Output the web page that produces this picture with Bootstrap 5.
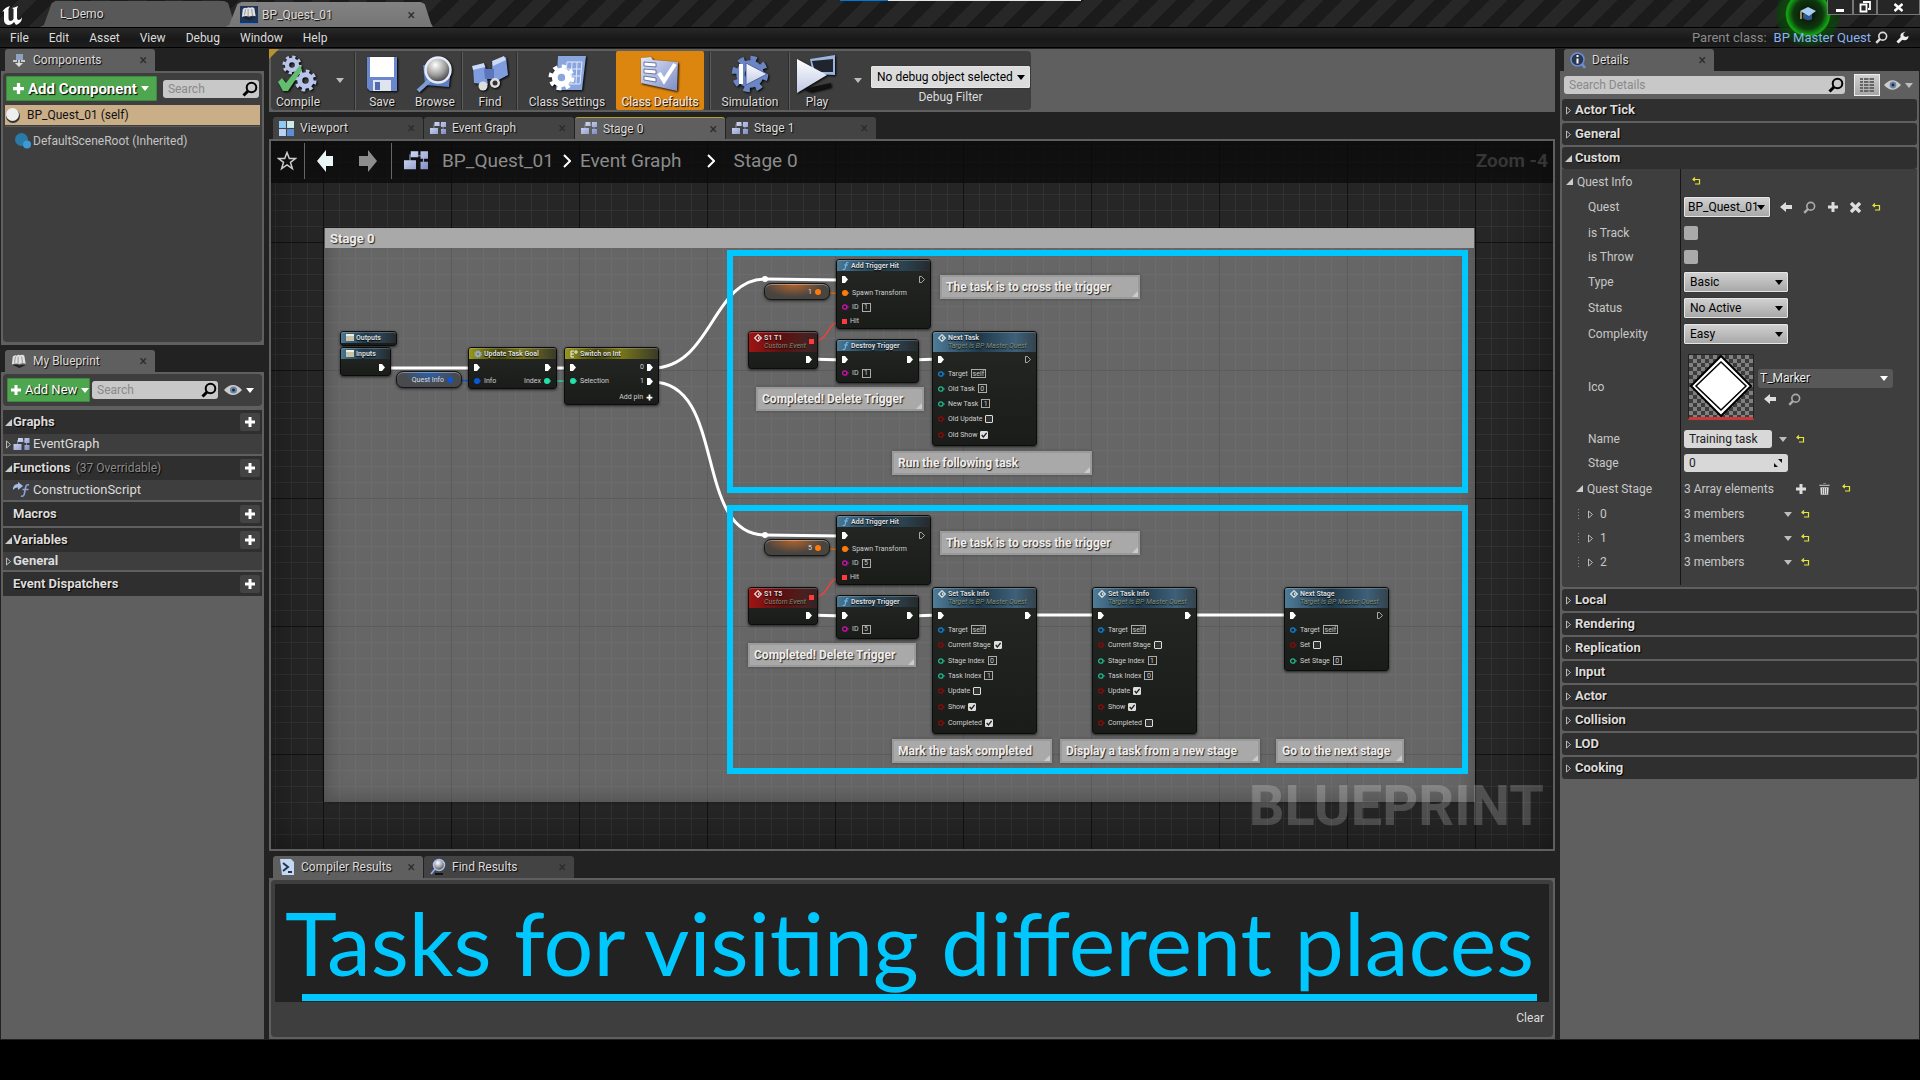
<!DOCTYPE html>
<html lang="en">
<head>
<meta charset="utf-8">
<meta name="viewport" content="width=device-width, initial-scale=1">
<title>BP_Quest_01</title>
<link href="https://cdn.jsdelivr.net/npm/bootstrap@5.3.0/dist/css/bootstrap.min.css" rel="stylesheet">
<style>
:root{--frame:#5f5f5f;--panel:#3e3e3e;--head:#2f2f2f;--dark:#222;--cyan:#00c8ff}
body{font-family:Roboto,"Liberation Sans",sans-serif;font-size:13px;line-height:16px;color:#dcdcdc;background:#000;height:100vh;overflow:hidden}
svg{display:block;flex:none}
button,input,select{font-family:inherit}
.plain{background:none;border:0;padding:0;color:inherit;line-height:inherit;font-size:inherit}
.sh{text-shadow:1px 1px 1px #000}
.fs12{font-size:12px}
/* title bar */
.titlebar{height:28px;background:repeating-linear-gradient(135deg,#1b1b1b 0 13px,#272727 13px 26px);border-bottom:1px solid #000}
.logo{width:28px;height:24px;margin-right:12px}
.wtab{height:26px;padding-left:20px;background:#585858;clip-path:polygon(0 100%,2% 92%,6% 8%,8% 0,94% 0,96% 8%,99% 85%,100% 100%);font-size:12px}
.wtab-a{width:196px}
.wtab-b{width:208px;margin-left:-11px;background:linear-gradient(#828282,#757575);height:25px;padding-left:15px}
.wtab-b .closex{padding-right:18px}
.wbtn{height:15px;border:1px solid #777;border-top:0;background:#262626;color:#fff}
.progressline{left:840px;top:0;width:241px;height:1px;background:linear-gradient(90deg,#0078d7 20%,#e6e6e6 20%)}
.tutorial{right:79px;top:-19px;width:66px;height:66px;border-radius:50%;background:radial-gradient(closest-side,#0b1a0b 15%,#0d380d 45%,#14a814 65%,rgba(8,80,8,.75) 69%,rgba(8,66,8,.6) 94%,transparent)}
.menubar{height:20px;background:linear-gradient(#282828,#181818 60%,#1f1f1f);border-bottom:1px solid #000;padding:0 11px 0 10px}
.menubar a{color:#dcdcdc;text-decoration:none;margin-right:20px;font-size:12px}
.menubar .pclass{color:#8ab4f0;margin:0;font-size:13px;position:relative;z-index:1}
.menubar .plabel{color:#8b8b8b;margin-right:7px}
/* workspace */
.work{background:var(--dark);padding:1px;gap:5px}
.leftcol{width:263px}.rightcol{width:359px}
.tabs{height:22px;padding-left:4px;gap:1px;font-size:12px}
.ptab{width:150px;height:22px;background:#434343;border-radius:3px 3px 0 0;padding:0 8px 0 6px}
.ptab.on{background:var(--frame)}
.ptab.lit{border-top:1px solid #b8a030}
.ptab svg{margin-right:6px}
.closex{color:#2b2b2b;font-size:14px}
.gtabs{margin-top:5px}
.lefttabs{margin-top:5px}
.frame{background:var(--frame)}
.inner{background:var(--panel);border-radius:4px}
.green{background:#4ea64e;border:1px solid #3d8a3f;color:#fff;border-radius:1px;line-height:20px;white-space:nowrap}
.green svg{margin-right:3px}
.green .caret{margin-left:4px}
.green.big{font-size:15px;font-weight:700;height:25px;padding:0 7px 0 5px}
.green.mid{font-size:13px;height:24px;width:83px;padding:0 4px 0 2px}
.searchbox{background:#c8c8c8;border-radius:3px;height:18px;padding:0 1px 0 5px}
.searchbox input{border:0;background:none;outline:0;min-width:0;width:10px;padding:0;font-size:12px;height:18px}
.searchbox input::placeholder{color:#8a8a8a;opacity:1}
.caret{width:0;height:0;border:4px solid transparent;border-top:5px solid #fff;border-bottom:0;flex:none}
.caret.gray{border-top-color:#bdbdbd}.caret.blk{border-top-color:#000}
.compframe{padding:2px 0 3px}
.compbox{margin:0 2px;height:269px;padding:3px 2px 0;font-size:12px}
.comptop{gap:6px;padding:0 1px;margin-bottom:4px}
.selfrow{background:#c9ae88;color:#111;height:20px}
.selfrow svg{margin-right:6px}
.rootrow{height:29px;padding-left:10px;border-top:1px solid #5a5a5a;margin-top:1px;color:#c4c4c4}
.rootrow svg{margin-right:2px}
.mybp{padding:2px}
.bptop{height:32px;padding:0 4px;margin-bottom:4px;gap:2px}
.bpsearch{width:126px}
.cat{background:var(--head);height:24px;font-weight:700;padding:0 2px 0 1px}
.subrow{background:var(--panel);height:20px;padding-left:1px}
.subrow svg:nth-child(2){margin-right:3px}
.subrow.short{height:18px}
.gapt{margin-top:2px}
.over{font-weight:400;font-size:12px;color:#8b8b8b;margin-left:2px}
.exp{width:9px;flex:none}
.plusbtn{width:20px;height:18px;background:#434343;border:0;border-radius:2px;padding:0}
/* toolbar */
.toolbar{height:63px;padding:2px}
.toolset{width:760px;height:59px;font-size:12px}
.tool{height:59px;background:none;border:0;padding:0;color:#dcdcdc;text-shadow:1px 1px 1px #000;line-height:16px}
.tool svg{width:40px;height:38px;margin-bottom:1px;filter:drop-shadow(1px 1px 1px #000)}
.tool.sel{background:#dd860f;border-radius:2px;color:#eee}
.dirty{position:absolute;left:-2px;top:-2px;border:5px solid;border-color:#b8922c transparent transparent #b8922c}
.tdrop{width:30px}.tdrop2{width:27px}
.sep{width:1px;background:#5c5c5c;height:58px;flex:none;box-shadow:-1px 0 #2c2c2c}
.sep.far{margin-left:6px}
.w88{width:88px}.w86{width:86px}.w52{width:52px}.w54{width:54px}.w98{width:98px}.w78{width:78px}.w104{width:104px}
.wrapsel{position:relative}
.wrapsel .caret{position:absolute;right:5px;top:50%;margin-top:-2px;pointer-events:none}
.wrapsel select{appearance:none;display:block;width:100%;border:1px solid #e6e6e6;background:linear-gradient(#d0d0d0,#a8a8a8);color:#000;height:20px;font-size:12px;padding:0 5px;line-height:16px;border-radius:1px;box-shadow:0 0 1px #000}
.wrapsel.w86 select{padding:0 3px}
.dbgbox{padding-top:9px}
.dbg{width:159px;margin-bottom:1px}
.dbg select{background:#dcdcdc;height:22px}
/* graph */
.graph{border:2px solid var(--frame);position:relative;overflow:hidden;min-height:0;
 background-color:#262626;
 background-image:linear-gradient(90deg,#121212 1px,transparent 1px),linear-gradient(#121212 1px,transparent 1px),linear-gradient(90deg,#323232 1px,transparent 1px),linear-gradient(#323232 1px,transparent 1px);
 background-size:128px 128px,128px 128px,16px 16px,16px 16px;background-position:52px 101px,52px 101px,4px 5px,4px 5px}
.graph::after{content:"";position:absolute;inset:0;box-shadow:inset 0 0 50px rgba(0,0,0,.45);pointer-events:none}
.crumbs{position:relative;z-index:3;height:42px;background:rgba(10,10,10,.75);font-size:19px;color:#8b8b8b;padding:0 5px 2px 6px}
.crumbs a{color:#8b8b8b;text-decoration:none}
.crumbs .bar{width:1px;height:36px;background:#666;margin:0 12px 0 7px}
.crumbs .bar2{margin:0 12px 0 14px}
.fwd{margin-left:26px}.c1{margin-left:14px}.ch1{margin:0 9px}.ch2{margin:0 19px 0 25px}
.zoomlbl{font-weight:700;color:#363636}
.pan{position:absolute;left:-271px;top:-141px}
.pan>*{position:absolute}
.water{position:absolute;right:9px;bottom:8px;font-size:56px;line-height:70px;font-weight:700;color:rgba(255,255,255,.2)}
.cbox{left:324px;top:228px;width:1151px;height:574px;background:rgba(166,166,166,.5);box-shadow:inset 0 0 22px rgba(0,0,0,.25),0 0 2px #000}
.cbox b{display:block;height:20px;margin:0 1px;background:#a9a9a9;padding-left:5px;line-height:21px;color:#eee;text-shadow:1px 1px 1px #222}
.hl{left:727px;width:741px;border:6px solid var(--cyan)}
.note{height:24px;border:2px solid #9a9a9a;background:#a9a9a9;color:#eee;font-weight:700;font-size:12px;line-height:20px;padding-left:4px;text-shadow:1px 1px 1px #222;box-shadow:0 0 3px rgba(0,0,0,.3);white-space:nowrap}
.note::after{content:"";position:absolute;right:0;bottom:0;border:3px solid;border-color:transparent #ccc #ccc transparent}
.bpn{background:linear-gradient(#252725,#1a1c1a);border:1px solid #0c0c0c;border-radius:3px;box-shadow:0 1px 3px rgba(0,0,0,.7);font-size:7px;line-height:8px;color:#cfcfcf;white-space:nowrap}
.bpn header{height:11px;font-weight:700;padding:2px 0 0 5px;gap:2px;border-radius:2px 2px 0 0;box-shadow:inset 0 1px rgba(255,255,255,.2);display:flex;color:#ddd;text-shadow:0 1px 1px #000;margin-bottom:1px}
.bpn header.two{height:20px;margin-bottom:0}
.bpn.tall{padding-bottom:2px}
.bpn header i{display:block;font-weight:400;color:#87907a}
.h-blue{background:linear-gradient(90deg,#4a7894,#213b4b 45%,#2b4453 70%,#252a2c)}
.h-blue.two{background:linear-gradient(90deg,#4f7c99,#1f394a 45%,#3f6078 80%,#33434e)}
.h-olive{background:linear-gradient(90deg,#98981c,#45450f 35%,#77771c 60%,#3a3a28)}
.h-red{background:linear-gradient(90deg,#a01414,#5a1010 50%,#4a2020 80%,#332424)}
.pr{height:14px;display:flex;align-items:center;padding:0 5px;gap:3px}
.two~.pr:not(.x){height:15px}
.two~.pr.k:not(.x){height:16px}
.addpin{margin-top:2px}
.bpn input[type=text]{width:9px;height:9px;border:1px solid #aaa;background:none;color:#ccc;font-size:7px;padding:0;text-align:center;line-height:7px}
.bpn input.slf{width:15px}
.bpn input[type=checkbox]{appearance:none;width:8px;height:8px;margin:0;border:1px solid #ddd;border-radius:1px;background:#333}
.bpn input[type=checkbox]:checked{background:#ddd url("data:image/svg+xml,%3Csvg xmlns='http://www.w3.org/2000/svg' viewBox='0 0 6 6'%3E%3Cpath d='M.7 3 2.4 5 5.600 1' fill='none' stroke='%23222' stroke-width='1.300'/%3E%3C/svg%3E") center/6px 6px no-repeat}
.pill{width:66px;height:17px;border:1px solid #161616;border-radius:7px;color:#ddd;font-size:7px;line-height:8px;display:flex;align-items:center;justify-content:flex-end;padding-right:8px;gap:3px;box-shadow:0 1px 3px rgba(0,0,0,.6),inset 0 1px rgba(255,255,255,.35)}
.p-o{background:radial-gradient(ellipse at 45% 0,#b5622a,transparent 60%),#484541}
.p-b{background:radial-gradient(ellipse at 50% 0,#2a62b0,transparent 60%),#484a4d}
.dot{width:6px;height:6px;border-radius:50%;flex:none}
.dot.or{background:#ff7a0a}.dot.bl{background:#0a58d8}
.sq{width:5px;height:5px;background:#ff3a3a;flex:none}
.sq.hs{position:absolute;right:3px;top:7px}
#hlA{top:250px;height:243px}#hlB{top:505px;height:269px}
#nOut{left:340px;top:331px;width:57px;padding-bottom:1px}#nIn{left:340px;top:347px;width:51px;padding-bottom:1px}
#nUpd{left:468px;top:347px;width:89px}#nSw{left:564px;top:347px;width:95px}
#pQ{left:396px;top:371px}#pA{left:764px;top:283px}#pB{left:764px;top:539px}
#nAddA{left:836px;top:259px;width:95px}#nAddB{left:836px;top:515px;width:95px}
#nDesA{left:836px;top:339px;width:83px}#nDesB{left:836px;top:595px;width:83px}
#nEvA{left:748px;top:331px;width:70px}#nEvB{left:748px;top:587px;width:70px}
#nNext{left:932px;top:331px;width:105px}#nSetA{left:932px;top:587px;width:105px}
#nSetB{left:1092px;top:587px;width:105px}#nStg{left:1284px;top:587px;width:105px}
#cA{left:940px;top:275px;width:200px}#cB{left:940px;top:531px;width:200px}
#cC{left:756px;top:387px;width:168px}#cD{left:748px;top:643px;width:168px}
#cE{left:892px;top:451px;width:200px}#cF{left:892px;top:739px;width:160px}
#cG{left:1060px;top:739px;width:200px}#cH{left:1276px;top:739px;width:128px}
/* results */
.results{height:161px;padding:2px}
.results .inner{height:157px;padding:4px}
.log{height:118px;background:var(--dark);padding:8px 12px 0 10px}
.headline{font-family:Lato,"Open Sans",sans-serif;font-size:88px;line-height:100px;color:var(--cyan);white-space:nowrap}
.rule{height:7px;background:var(--cyan);margin:2px 0 0 17px}
.clear{font-size:12px;margin-right:5px}
/* details */
.dpanel{padding:3px 2px 0}
.dtop{padding:0 4px 0 2px;margin-bottom:3px}
.dtop .grid-btn{margin-left:9px}
.dcat{background:var(--head);height:22px;border-radius:3px;font-weight:700;margin-bottom:2px;padding-left:2px;gap:2px;flex:none}
.props{background:var(--panel);margin-bottom:2px;border-radius:0 0 3px 3px;font-size:12px;padding-bottom:13px;position:relative;color:#c8c8c8}
.props::before{content:"";position:absolute;left:118px;top:0;bottom:2px;width:1px;background:#161616}
.prow{height:26px;display:flex;align-items:center}
.prow>.nm{width:122px;padding-left:26px;flex:none;display:flex;align-items:center}
.prow.h24{height:24px}.prow.h25{height:25px}.prow.h27{height:27px}.prow.h80{height:80px}
.prow>.nm.top{padding-left:3px;gap:3px}.prow>.nm.arr{padding-left:13px;gap:3px}.prow>.nm.el{padding-left:15px;gap:5px}
.props input[type=checkbox]{appearance:none;width:14px;height:14px;margin:0;background:#aaa;border-radius:2px}
.props input[type=text]{border:0;border-radius:3px;background:#d8d8d8;color:#222;height:18px;padding:0 5px;font-size:12px}
.thumb{width:66px;height:66px;border:1px solid #222;background:repeating-conic-gradient(#3c3c3c 0 25%,#808080 0 50%) 0 0/8px 8px;border-bottom:3px solid #c83a3a}
.asset{width:135px}
.asset select{background:#585858;border:0;color:#eee;text-shadow:1px 1px #000;padding:0 2px;box-shadow:none;height:19px;border-radius:3px}
.ics{gap:11px;margin-left:10px;color:#ddd}.ics2{gap:12px;margin:5px 0 0 6px;color:#ddd}.ics3{gap:12px;color:#ddd}
.arrn{width:111px}
.carA{margin:0 9px 0 7px}.carB{margin:0 9px 0 2px}
.spin{position:absolute;right:6px;top:5px}
.grip{width:4px;height:13px;background:radial-gradient(#888 .6px,transparent 1px) 0 0/3px 3px}
.grid-btn{width:26px;height:22px;background:linear-gradient(#d0d0d0,#a8a8a8);border:1px solid #eee;padding:0}
.foot{height:40px}
</style>
<script src="https://cdn.jsdelivr.net/npm/bootstrap@5.3.0/dist/js/bootstrap.bundle.min.js"></script>
</head>
<body class="d-flex flex-column">
<svg width="0" height="0" class="position-absolute" aria-hidden="true">
<defs>
<linearGradient id="lav" x1="0" y1="0" x2="1" y2="1"><stop offset="0" stop-color="#dfe6fb"/><stop offset="1" stop-color="#7d8cc4"/></linearGradient>
<linearGradient id="wht" x1="0" y1="0" x2="0" y2="1"><stop offset="0" stop-color="#fff"/><stop offset="1" stop-color="#bfc8e4"/></linearGradient>
<radialGradient id="lens" cx=".4" cy=".3" r=".8"><stop offset="0" stop-color="#fff"/><stop offset=".5" stop-color="#a0a0a0"/><stop offset="1" stop-color="#222"/></radialGradient>
</defs>
<symbol id="mag" viewBox="0 0 16 16"><circle cx="9.500" cy="6.500" r="4.800" fill="none" stroke="currentColor" stroke-width="2"/><path d="M6 10 1.500 14.500" stroke="currentColor" stroke-width="3"/></symbol>
<symbol id="plus" viewBox="0 0 12 12"><path d="M4.500 1h3v3.500H11v3H7.500V11h-3V7.500H1v-3h3.500z" fill="currentColor"/></symbol>
<symbol id="eye" viewBox="0 0 18 12"><path d="M0 6Q9-4 18 6 9 16 0 6z" fill="#ccc"/><circle cx="9.500" cy="6" r="3.600" fill="#6c83a8"/><circle cx="9.500" cy="6" r="1.500" fill="#1d2a3c"/></symbol>
<symbol id="open" viewBox="0 0 9 9"><path d="M8 1v7H1z" fill="#ccc"/></symbol>
<symbol id="shut" viewBox="0 0 9 9"><path d="M2.500 1v7l4-3.500z" fill="none" stroke="#bbb"/></symbol>
<symbol id="gr" viewBox="0 0 16 13"><path d="M4 2v6M9 3h3M13 3v6" stroke="#8b97c4" stroke-width=".8"/><path d="M4.500 0h5v4h-5zM11 0h5v5h-5zM0 6h8v6H0zM11 7h5v5h-5z" fill="url(#lav)"/></symbol>
<symbol id="vp" viewBox="0 0 14 14"><path fill="#8fc8f0" d="M0 0h6.500v6.500H0z"/><path fill="#cfe9e4" d="M7.500 0H14v6.500H7.500z"/><path fill="#b9d3f5" d="M0 7.500h6.500V14H0z"/><path fill="#5e8fd6" d="M7.500 7.500H14V14H7.500z"/></symbol>
<symbol id="undo" viewBox="0 0 9 9"><path d="M1 2.500h6.500v4.500H3M3 .5 1 2.500l2 1.500" fill="none" stroke="#e8e337" stroke-width="1.200"/></symbol>
<symbol id="back" viewBox="0 0 12 10"><path d="M0 5 6 0v3h6v4H6v3z" fill="currentColor"/></symbol>
<symbol id="ex" viewBox="0 0 6 7"><path d="M0 0h3l3 3.500L3 7H0z" fill="#fff"/></symbol>
<symbol id="exo" viewBox="0 0 6 7"><path d="M.5.5h2L5.500 3.500 2.500 6.500h-2z" fill="none" stroke="#ccc" stroke-width=".8"/></symbol>
<symbol id="pin" viewBox="0 0 7 6"><circle cx="2.800" cy="3" r="2.200" fill="none" stroke="currentColor" stroke-width="1.300"/><path d="M5.500 1.700 7 3 5.500 4.300z" fill="currentColor"/></symbol>
<symbol id="pinf" viewBox="0 0 7 6"><circle cx="3" cy="3" r="3" fill="currentColor"/><path d="M5.500 1.500 7 3 5.500 4.500z" fill="currentColor"/></symbol>
<symbol id="fn" viewBox="0 0 7 8"><path d="M6.500.8C5-.2 4.300.8 4 2.500L3.200 6C3 7.500 2 7.800.6 7.200M2 3h4" fill="none" stroke="#6cb6ea" stroke-width="1.200"/></symbol>
<symbol id="ev" viewBox="0 0 8 8"><path d="M4 .7 7.300 4 4 7.300.7 4z" fill="none" stroke="#ddd" stroke-width="1.200"/><path d="M4 2.500 6 4 4 5.500z" fill="#ddd"/></symbol>
<symbol id="doc" viewBox="0 0 8 7"><path d="M0 0h8v7H0z" fill="#c8c2a8"/><path d="M0 0h8v2H0z" fill="#f2eedc"/></symbol>
<symbol id="book" viewBox="0 0 18 16"><path d="M2 3q3-2 4.500-1Q8 0 10 1.500 13 0 15 2l1.500 9q-4-1-7 .5Q5 10 1 12z" fill="#e2e2e2"/><path d="M5 3 4 10M8 3v8M12 3l1 8" stroke="#8d8d8d"/><path d="M2 12.500q4-1.500 7.500.5 3-1.500 7-.5l-7 3.500z" fill="#222"/></symbol>
<symbol id="gear" viewBox="0 0 20 20"><circle cx="10" cy="10" r="5" fill="none" stroke="currentColor" stroke-width="4.400"/><circle cx="10" cy="10" r="8" fill="none" stroke="currentColor" stroke-width="3.200" stroke-dasharray="3.140 3.140"/></symbol>
</svg>

<div class="titlebar d-flex align-items-end position-relative">
  <svg class="logo" viewBox="0 0 28 24"><path d="M2 9C4 6 6 4 10 3L8.500 6v9q0 3 2 3t3-2V6L12 5q3-.5 6-2l-1 3v9q0 2 2 2t3-3q0 6-6 8l-2-3q-2 3-6 3-4-1-4-5V8.500Q3 8 2 9z" fill="#fff"/></svg>
  <div class="wtab wtab-a d-flex align-items-center sh">L_Demo</div>
  <div class="wtab wtab-b d-flex align-items-center sh">
    <svg width="18" height="18" class="me-1" viewBox="0 0 18 18"><path d="M0 0h18v17H0z" fill="#1f3558"/><path d="M0 17h18v1H0z" fill="#3a78e0"/><use href="#book" x="1" width="16" height="15"/></svg>
    <span class="flex-grow-1">BP_Quest_01</span><button class="plain closex" aria-label="Close tab">×</button>
  </div>
  <div class="progressline position-absolute"></div>
  <div class="tutorial position-absolute d-flex align-items-center justify-content-center">
    <svg width="18" height="16" viewBox="0 0 18 16"><path d="M4 8v4q5 4 9 1V8z" fill="#33568c"/><path d="M1 5 9 1l8 4-7 5z" fill="#a8cdf2"/><path d="M2 5.500V13" stroke="#d8b070" stroke-width="1.500"/></svg>
  </div>
  <div class="position-absolute top-0 end-0 d-flex">
    <button class="wbtn px-2" aria-label="Minimize"><svg width="8" height="12"><path d="M0 8h8v3H0z" fill="#fff"/></svg></button>
    <button class="wbtn px-1" aria-label="Restore"><svg width="14" height="12" viewBox="0 0 14 12"><path d="M5 1h7v7h-2M2.500 3.500h6v7h-6z" fill="none" stroke="#fff" stroke-width="1.800"/></svg></button>
    <button class="wbtn px-3" aria-label="Close"><svg width="9" height="12" viewBox="0 0 8 12"><path d="m0 3 8 7M8 3 0 10" stroke="#fff" stroke-width="2.500"/></svg></button>
  </div>
</div>
<nav class="menubar d-flex align-items-center">
  <a href="#">File</a><a href="#">Edit</a><a href="#">Asset</a><a href="#">View</a><a href="#">Debug</a><a href="#">Window</a><a href="#">Help</a>
  <div class="ms-auto d-flex align-items-center"><span class="plabel">Parent class:</span><a href="#" class="pclass">BP Master Quest</a>
    <svg width="13" height="13" class="mx-1"><use href="#mag"/></svg>
    <svg width="13" height="13" class="ms-1" viewBox="0 0 13 13"><path d="m1.500 11.500 6-6" stroke="#eee" stroke-width="3"/><path d="M7 1.500A4 4 0 1 0 12.500 5L10 6 7.500 5 7.500 2.500 9.500.5z" fill="#eee"/></svg></div>
</nav>

<div class="work d-flex flex-grow-1">
  <!-- left column -->
  <div class="leftcol d-flex flex-column">
    <div class="tabs d-flex"><div class="ptab on d-flex align-items-center sh">
      <svg width="16" height="16" viewBox="0 0 16 16"><path d="M5 2h7v6H5z" fill="#8fa2c4"/><path d="M8 8v5M2 9h4M10 9h4" stroke="#ccc" stroke-width="2"/><path d="m4 11 4 4 4-4z" fill="#ddd"/></svg>
      <span class="flex-grow-1">Components</span><button class="plain closex" aria-label="Close">×</button></div></div>
    <div class="frame compframe">
      <div class="compbox inner">
        <div class="d-flex align-items-center comptop">
          <button class="green big d-flex align-items-center sh"><svg width="13" height="13"><use href="#plus"/></svg>Add Component<span class="caret"></span></button>
          <label class="searchbox d-flex align-items-center flex-grow-1"><input class="flex-grow-1" type="search" placeholder="Search" aria-label="Search components"><svg width="16" height="16"><use href="#mag" color="#000"/></svg></label>
        </div>
        <div class="selfrow d-flex align-items-center"><svg width="16" height="16" viewBox="0 0 16 16"><circle cx="8" cy="9" r="7" fill="#333"/><circle cx="7.500" cy="7.500" r="6.500" fill="#eee"/></svg>BP_Quest_01 (self)</div>
        <div class="rootrow d-flex align-items-center"><svg width="16" height="16" viewBox="0 0 16 16"><circle cx="6.500" cy="6.500" r="6.500" fill="#2a7aa8"/><circle cx="12" cy="11.500" r="4" fill="#3c9bd6"/></svg>DefaultSceneRoot (Inherited)</div>
      </div></div>
    <div class="tabs lefttabs d-flex"><div class="ptab on d-flex align-items-center sh">
      <svg width="16" height="16"><use href="#book"/></svg><span class="flex-grow-1">My Blueprint</span><button class="plain closex" aria-label="Close">×</button></div></div>
    <div class="frame mybp flex-grow-1">
      <div class="inner bptop d-flex align-items-center">
        <button class="green mid d-flex align-items-center sh"><svg width="12" height="12"><use href="#plus"/></svg>Add New<span class="caret"></span></button>
        <label class="searchbox bpsearch d-flex align-items-center"><input class="flex-grow-1" type="search" placeholder="Search" aria-label="Search blueprint"><svg width="16" height="16"><use href="#mag" color="#000"/></svg></label>
        <button class="plain d-flex align-items-center ms-1" aria-label="View options"><svg width="18" height="12" class="me-1"><use href="#eye"/></svg><span class="caret"></span></button>
      </div>
      <div class="cat d-flex align-items-center sh"><svg class="exp" height="9"><use href="#open"/></svg><span class="flex-grow-1">Graphs</span><button class="plusbtn d-flex align-items-center justify-content-center text-white" aria-label="Add graph"><svg width="12" height="12"><use href="#plus"/></svg></button></div>
      <div class="subrow d-flex align-items-center"><svg class="exp" height="9"><use href="#shut"/></svg><svg width="17" height="13"><use href="#gr"/></svg>EventGraph</div>
      <div class="cat d-flex align-items-center sh gapt"><svg class="exp" height="9"><use href="#open"/></svg><span class="flex-grow-1">Functions <span class="over">(37 Overridable)</span></span><button class="plusbtn d-flex align-items-center justify-content-center text-white" aria-label="Add function"><svg width="12" height="12"><use href="#plus"/></svg></button></div>
      <div class="subrow d-flex align-items-center"><span class="exp"></span><svg width="17" height="16" viewBox="0 0 17 16"><path d="M0 6q1-4 5-4V0l5 4-5 4V5.500Q2 5 0 8z" fill="#a8bce4"/><path d="M16 3q-3-1-3.500 3l-1 5q-.5 4-3.500 3M9.500 7.500h6" fill="none" stroke="#8ea3d8" stroke-width="1.600"/></svg>ConstructionScript</div>
      <div class="cat d-flex align-items-center sh gapt"><span class="exp"></span><span class="flex-grow-1">Macros</span><button class="plusbtn d-flex align-items-center justify-content-center text-white" aria-label="Add macro"><svg width="12" height="12"><use href="#plus"/></svg></button></div>
      <div class="cat d-flex align-items-center sh gapt"><svg class="exp" height="9"><use href="#open"/></svg><span class="flex-grow-1">Variables</span><button class="plusbtn d-flex align-items-center justify-content-center text-white" aria-label="Add variable"><svg width="12" height="12"><use href="#plus"/></svg></button></div>
      <div class="subrow short d-flex align-items-center fw-bold"><svg class="exp" height="9"><use href="#shut"/></svg>General</div>
      <div class="cat d-flex align-items-center sh gapt"><span class="exp"></span><span class="flex-grow-1">Event Dispatchers</span><button class="plusbtn d-flex align-items-center justify-content-center text-white" aria-label="Add dispatcher"><svg width="12" height="12"><use href="#plus"/></svg></button></div>
    </div>
  </div>

  <!-- centre column -->
  <div class="d-flex flex-column flex-grow-1">
    <div class="frame toolbar"><div class="inner toolset d-flex align-items-center position-relative">
      <span class="dirty"></span>
      <button class="tool w54 d-flex flex-column align-items-center justify-content-end"><svg viewBox="0 0 40 38"><g color="#b8c4ea"><use href="#gear" x="4" y="0" width="20" height="20"/><use href="#gear" x="16" y="14" width="23" height="23"/></g><path d="m0 27 4-4 4 5L22 10l2 5L10 36H5z" fill="#62bd6c"/></svg>Compile</button>
      <button class="plain tdrop d-flex justify-content-center" aria-label="Compile options"><span class="caret gray"></span></button><span class="sep"></span>
      <button class="tool w52 d-flex flex-column align-items-center justify-content-end"><svg viewBox="0 0 40 38"><path d="M5 2h30v34H8l-3-3z" fill="#6a86cc"/><path d="M8 2h24v20H8z" fill="#fff"/><path d="M11 25h18v11H11z" fill="#dfe4ee"/><path d="M13 27h5v8h-5z" fill="#526bb0"/></svg>Save</button>
      <button class="tool w54 d-flex flex-column align-items-center justify-content-end"><svg viewBox="0 0 40 38"><path d="M8 10h28l-2 22-24-2z" fill="#5f7fc0"/><path d="M15 25 3 36" stroke="#7f9bd4" stroke-width="4"/><circle cx="23" cy="15" r="12.500" fill="url(#lens)" stroke="#e6ecfa" stroke-width="2.500"/></svg>Browse</button><span class="sep"></span>
      <button class="tool w54 d-flex flex-column align-items-center justify-content-end"><svg viewBox="0 0 40 38"><path d="m3 12 12-2 3 20-14-2zM22 8 36 2l2 18-15 8z" fill="#7f9cdf"/><path d="m2 11 12-3 1 4-12 3zM22 6l12-5 2 4-13 6z" fill="#ccd8f6"/><path d="M14 14h10v10H15z" fill="#5b76ba"/><circle cx="13" cy="31" r="4.500" fill="#ddd"/><circle cx="25" cy="28" r="5" fill="#ddd"/><circle cx="25" cy="28" r="2.500" fill="#333"/></svg>Find</button><span class="sep"></span>
      <button class="tool w98 d-flex flex-column align-items-center justify-content-end"><svg viewBox="0 0 40 38"><path d="M11 1h28l-4 34H9z" fill="#8ba5dd"/><path d="M20 7h15l-2 22H18zM20 14h14M19 21h14M25 7l-1 22M30 7l-1 22" fill="none" stroke="#dfe9ff"/><g color="#fff"><use href="#gear" x="1" y="9" width="27" height="27"/></g></svg>Class Settings</button>
      <button class="tool sel w88 d-flex flex-column align-items-center justify-content-end"><svg viewBox="0 0 40 38"><path d="m1 3 10-1 2 3 25 2-1 29-36-8z" fill="url(#lav)"/><path d="m4 7 12 1v4L4 11zM4 14l12 1v4L4 18zM4 21l12 2v4L4 25z" fill="#fff" stroke="#3b4a80" stroke-width=".7"/><path d="m19 18 5 8L35 9" fill="none" stroke="#fff" stroke-width="4"/></svg>Class Defaults</button>
      <span class="sep far"></span>
      <button class="tool w78 d-flex flex-column align-items-center justify-content-end"><svg viewBox="0 0 40 38"><g color="#6c86c4"><use href="#gear" x="1" y="0" width="38" height="38"/></g><path d="M9 9h4v20H9z" fill="#fff"/><path d="m16 8 21 11-21 11z" fill="url(#wht)" stroke="#4d64a0"/></svg>Simulation</button><span class="sep"></span>
      <button class="tool w54 d-flex flex-column align-items-center justify-content-end"><svg viewBox="0 0 40 38"><path d="m13 4 25-4v20l-22-1z" fill="#9db4e0"/><path d="m15 6 21-2v13H18z" fill="#20242c"/><path d="m6 34 28-6v4L14 37z" fill="#111"/><path d="M0 4 30 20 0 38z" fill="url(#wht)"/></svg>Play</button>
      <button class="plain tdrop2 d-flex justify-content-center" aria-label="Play options"><span class="caret gray"></span></button>
      <div class="text-center dbgbox"><div class="wrapsel dbg"><select id="dbgsel"><option>No debug object selected</option></select><span class="caret blk"></span></div><label for="dbgsel" class="d-block">Debug Filter</label></div>
    </div></div>
    <div class="tabs gtabs d-flex">
      <div class="ptab d-flex align-items-center sh"><svg width="15" height="15"><use href="#vp"/></svg><span class="flex-grow-1">Viewport</span><button class="plain closex" aria-label="Close">×</button></div>
      <div class="ptab d-flex align-items-center sh"><svg width="16" height="13"><use href="#gr"/></svg><span class="flex-grow-1">Event Graph</span><button class="plain closex" aria-label="Close">×</button></div>
      <div class="ptab on lit d-flex align-items-center sh"><svg width="16" height="13"><use href="#gr"/></svg><span class="flex-grow-1">Stage 0</span><button class="plain closex" aria-label="Close">×</button></div>
      <div class="ptab d-flex align-items-center sh"><svg width="16" height="13"><use href="#gr"/></svg><span class="flex-grow-1">Stage 1</span><button class="plain closex" aria-label="Close">×</button></div>
    </div>
    <div class="graph flex-grow-1">
      <div class="crumbs d-flex align-items-center">
        <button class="plain" aria-label="Favorite"><svg width="20" height="20" viewBox="0 0 20 20"><path d="m10 1.500 2.300 6h6.200l-5 3.900 1.900 6.300L10 14l-5.400 3.700 1.900-6.300-5-3.900h6.200z" fill="none" stroke="#ccc" stroke-width="1.500"/></svg></button>
        <span class="bar"></span>
        <button class="plain" aria-label="Back"><svg width="16" height="22" viewBox="0 0 16 22"><path d="M0 11 9 0v6h7v10H9v6z" fill="#e8f6f8"/></svg></button>
        <button class="plain fwd" aria-label="Forward"><svg width="18" height="22" viewBox="0 0 18 22"><path d="M18 11 9 0v6H0v10h9v6z" fill="#8d8d8d"/></svg></button>
        <span class="bar bar2"></span>
        <svg width="24" height="20"><use href="#gr"/></svg>
        <a href="#" class="c1">BP_Quest_01</a><svg width="8" height="14" viewBox="0 0 8 14" class="ch1"><path d="m1 1 6 6-6 6" fill="none" stroke="#fff" stroke-width="2"/></svg>
        <a href="#">Event Graph</a><svg width="8" height="14" viewBox="0 0 8 14" class="ch2"><path d="m1 1 6 6-6 6" fill="none" stroke="#fff" stroke-width="2"/></svg>
        <a href="#">Stage 0</a>
        <span class="zoomlbl ms-auto">Zoom -4</span>
      </div>
      <div class="pan">
        <div class="cbox"><b>Stage 0</b></div>
        <svg width="1555" height="851" fill="none">
          <path stroke="#fff" stroke-width="3" d="M385 368H476M550 368h22M652 368C712 368 712 279 765 279L840 280M652 382C727 382 693 535 765 535l75 1M808 359l36 1M910 360l30-1M808 615l36 1M910 616l30-1M1028 615h72M1188 615h104"/>
          <circle cx="765" cy="279" r="3" fill="#fff"/><circle cx="765" cy="535" r="3" fill="#fff"/>
          <path d="M812 341c20 0 12-19 30-19M812 597c20 0 12-19 30-19" stroke="#f04040" stroke-width="1.500"/>
          <path d="M818 292l26 2M818 548l26 2" stroke="#d8690c" stroke-width="1.500"/>
          <path d="M450 380l26 1" stroke="#0a58c8" stroke-width="1.500"/><path d="M546 381h26" stroke="#22d3a0" stroke-width="1.500"/>
        </svg>
        <div class="bpn" id="nOut"><header class="h-blue"><svg width="8" height="7"><use href="#doc"/></svg>Outputs</header></div>
        <div class="bpn" id="nIn"><header class="h-blue"><svg width="8" height="7"><use href="#doc"/></svg>Inputs</header><div class="pr justify-content-end"><svg width="6" height="7"><use href="#ex"/></svg></div></div>
        <div class="pill p-b" id="pQ">Quest Info<span class="dot bl"></span></div>
        <div class="bpn" id="nUpd"><header class="h-olive"><svg width="8" height="8" color="#9aa8c8"><use href="#gear"/></svg>Update Task Goal</header>
          <div class="pr justify-content-between"><svg width="6" height="7"><use href="#ex"/></svg><svg width="6" height="7"><use href="#ex"/></svg></div>
          <div class="pr"><svg width="7" height="6" color="#0a58d8"><use href="#pinf"/></svg>Info<span class="ms-auto">Index</span><svg width="7" height="6" color="#22e0a8"><use href="#pinf"/></svg></div></div>
        <div class="bpn" id="nSw"><header class="h-olive"><svg width="8" height="8" viewBox="0 0 8 8"><path d="M4 1H1v6h3M1 4h3M6 0v4M4 2h4" fill="none" stroke="#eee"/></svg>Switch on Int</header>
          <div class="pr"><svg width="6" height="7"><use href="#ex"/></svg><span class="ms-auto">0</span><svg width="6" height="7"><use href="#ex"/></svg></div>
          <div class="pr"><svg width="7" height="6" color="#22e0a8"><use href="#pinf"/></svg>Selection<span class="ms-auto">1</span><svg width="6" height="7"><use href="#ex"/></svg></div>
          <div class="pr justify-content-end addpin"><span>Add pin</span><svg width="7" height="7" color="#fff"><use href="#plus"/></svg></div></div>

        <div class="pill p-o" id="pA">1<span class="dot or"></span></div>
        <div class="bpn" id="nAddA"><header class="h-blue"><svg width="7" height="8"><use href="#fn"/></svg>Add Trigger Hit</header>
          <div class="pr justify-content-between"><svg width="6" height="7"><use href="#ex"/></svg><svg width="6" height="7"><use href="#exo"/></svg></div>
          <div class="pr"><svg width="7" height="6" color="#ff7a0a"><use href="#pinf"/></svg>Spawn Transform</div>
          <div class="pr"><svg width="7" height="6" color="#d010b0"><use href="#pin"/></svg><label for="a1">ID</label><input id="a1" type="text" value="1"></div>
          <div class="pr"><span class="sq"></span>Hit</div></div>
        <div class="bpn tall" id="nEvA"><header class="h-red two"><svg width="8" height="8"><use href="#ev"/></svg><span>S1 T1<i>Custom Event</i></span><span class="sq hs"></span></header>
          <div class="pr x justify-content-end"><svg width="6" height="7"><use href="#ex"/></svg></div></div>
        <div class="bpn tall" id="nDesA"><header class="h-blue"><svg width="7" height="8"><use href="#fn"/></svg>Destroy Trigger</header>
          <div class="pr justify-content-between"><svg width="6" height="7"><use href="#ex"/></svg><svg width="6" height="7"><use href="#ex"/></svg></div>
          <div class="pr"><svg width="7" height="6" color="#d010b0"><use href="#pin"/></svg><label for="a2">ID</label><input id="a2" type="text" value="1"></div></div>
        <div class="bpn tall" id="nNext"><header class="h-blue two"><svg width="8" height="8"><use href="#ev"/></svg><span>Next Task<i>Target is BP Master Quest</i></span></header>
          <div class="pr x justify-content-between"><svg width="6" height="7"><use href="#ex"/></svg><svg width="6" height="7"><use href="#exo"/></svg></div>
          <div class="pr"><svg width="7" height="6" color="#1080d0"><use href="#pin"/></svg><label for="b1">Target</label><input id="b1" class="slf" type="text" value="self"></div>
          <div class="pr"><svg width="7" height="6" color="#1cb88c"><use href="#pin"/></svg><label for="b2">Old Task</label><input id="b2" type="text" value="0"></div>
          <div class="pr"><svg width="7" height="6" color="#1cb88c"><use href="#pin"/></svg><label for="b3">New Task</label><input id="b3" type="text" value="1"></div>
          <div class="pr k"><svg width="7" height="6" color="#8c0a0a"><use href="#pin"/></svg><label for="b4">Old Update</label><input id="b4" type="checkbox"></div>
          <div class="pr k"><svg width="7" height="6" color="#8c0a0a"><use href="#pin"/></svg><label for="b5">Old Show</label><input id="b5" type="checkbox" checked></div></div>

        <div class="pill p-o" id="pB">5<span class="dot or"></span></div>
        <div class="bpn" id="nAddB"><header class="h-blue"><svg width="7" height="8"><use href="#fn"/></svg>Add Trigger Hit</header>
          <div class="pr justify-content-between"><svg width="6" height="7"><use href="#ex"/></svg><svg width="6" height="7"><use href="#exo"/></svg></div>
          <div class="pr"><svg width="7" height="6" color="#ff7a0a"><use href="#pinf"/></svg>Spawn Transform</div>
          <div class="pr"><svg width="7" height="6" color="#d010b0"><use href="#pin"/></svg><label for="c1">ID</label><input id="c1" type="text" value="5"></div>
          <div class="pr"><span class="sq"></span>Hit</div></div>
        <div class="bpn tall" id="nEvB"><header class="h-red two"><svg width="8" height="8"><use href="#ev"/></svg><span>S1 T5<i>Custom Event</i></span><span class="sq hs"></span></header>
          <div class="pr x justify-content-end"><svg width="6" height="7"><use href="#ex"/></svg></div></div>
        <div class="bpn tall" id="nDesB"><header class="h-blue"><svg width="7" height="8"><use href="#fn"/></svg>Destroy Trigger</header>
          <div class="pr justify-content-between"><svg width="6" height="7"><use href="#ex"/></svg><svg width="6" height="7"><use href="#ex"/></svg></div>
          <div class="pr"><svg width="7" height="6" color="#d010b0"><use href="#pin"/></svg><label for="c2">ID</label><input id="c2" type="text" value="5"></div></div>
        <div class="bpn tall" id="nSetA"><header class="h-blue two"><svg width="8" height="8"><use href="#ev"/></svg><span>Set Task Info<i>Target is BP Master Quest</i></span></header>
          <div class="pr x justify-content-between"><svg width="6" height="7"><use href="#ex"/></svg><svg width="6" height="7"><use href="#ex"/></svg></div>
          <div class="pr"><svg width="7" height="6" color="#1080d0"><use href="#pin"/></svg><label for="d1">Target</label><input id="d1" class="slf" type="text" value="self"></div>
          <div class="pr k"><svg width="7" height="6" color="#8c0a0a"><use href="#pin"/></svg><label for="d2">Current Stage</label><input id="d2" type="checkbox" checked></div>
          <div class="pr"><svg width="7" height="6" color="#1cb88c"><use href="#pin"/></svg><label for="d3">Stage Index</label><input id="d3" type="text" value="0"></div>
          <div class="pr"><svg width="7" height="6" color="#1cb88c"><use href="#pin"/></svg><label for="d4">Task Index</label><input id="d4" type="text" value="1"></div>
          <div class="pr k"><svg width="7" height="6" color="#8c0a0a"><use href="#pin"/></svg><label for="d5">Update</label><input id="d5" type="checkbox"></div>
          <div class="pr k"><svg width="7" height="6" color="#8c0a0a"><use href="#pin"/></svg><label for="d6">Show</label><input id="d6" type="checkbox" checked></div>
          <div class="pr k"><svg width="7" height="6" color="#8c0a0a"><use href="#pin"/></svg><label for="d7">Completed</label><input id="d7" type="checkbox" checked></div></div>
        <div class="bpn tall" id="nSetB"><header class="h-blue two"><svg width="8" height="8"><use href="#ev"/></svg><span>Set Task Info<i>Target is BP Master Quest</i></span></header>
          <div class="pr x justify-content-between"><svg width="6" height="7"><use href="#ex"/></svg><svg width="6" height="7"><use href="#ex"/></svg></div>
          <div class="pr"><svg width="7" height="6" color="#1080d0"><use href="#pin"/></svg><label for="e1">Target</label><input id="e1" class="slf" type="text" value="self"></div>
          <div class="pr k"><svg width="7" height="6" color="#8c0a0a"><use href="#pin"/></svg><label for="e2">Current Stage</label><input id="e2" type="checkbox"></div>
          <div class="pr"><svg width="7" height="6" color="#1cb88c"><use href="#pin"/></svg><label for="e3">Stage Index</label><input id="e3" type="text" value="1"></div>
          <div class="pr"><svg width="7" height="6" color="#1cb88c"><use href="#pin"/></svg><label for="e4">Task Index</label><input id="e4" type="text" value="0"></div>
          <div class="pr k"><svg width="7" height="6" color="#8c0a0a"><use href="#pin"/></svg><label for="e5">Update</label><input id="e5" type="checkbox" checked></div>
          <div class="pr k"><svg width="7" height="6" color="#8c0a0a"><use href="#pin"/></svg><label for="e6">Show</label><input id="e6" type="checkbox" checked></div>
          <div class="pr k"><svg width="7" height="6" color="#8c0a0a"><use href="#pin"/></svg><label for="e7">Completed</label><input id="e7" type="checkbox"></div></div>
        <div class="bpn tall" id="nStg"><header class="h-blue two"><svg width="8" height="8"><use href="#ev"/></svg><span>Next Stage<i>Target is BP Master Quest</i></span></header>
          <div class="pr x justify-content-between"><svg width="6" height="7"><use href="#ex"/></svg><svg width="6" height="7"><use href="#exo"/></svg></div>
          <div class="pr"><svg width="7" height="6" color="#1080d0"><use href="#pin"/></svg><label for="f1">Target</label><input id="f1" class="slf" type="text" value="self"></div>
          <div class="pr k"><svg width="7" height="6" color="#8c0a0a"><use href="#pin"/></svg><label for="f2">Set</label><input id="f2" type="checkbox"></div>
          <div class="pr"><svg width="7" height="6" color="#1cb88c"><use href="#pin"/></svg><label for="f3">Set Stage</label><input id="f3" type="text" value="0"></div></div>

        <div class="note" id="cA">The task is to cross the trigger</div><div class="note" id="cB">The task is to cross the trigger</div>
        <div class="note" id="cC">Completed! Delete Trigger</div><div class="note" id="cD">Completed! Delete Trigger</div>
        <div class="note" id="cE">Run the following task</div><div class="note" id="cF">Mark the task completed</div>
        <div class="note" id="cG">Display a task from a new stage</div><div class="note" id="cH">Go to the next stage</div>
        <div class="hl" id="hlA"></div><div class="hl" id="hlB"></div>
      </div>
      <div class="water">BLUEPRINT</div>
    </div>
    <div class="tabs gtabs d-flex">
      <div class="ptab on d-flex align-items-center sh"><svg width="16" height="18" viewBox="0 0 16 18"><path d="M1 1h11l3 3v13H3z" fill="#c4d8f4"/><path d="m4 5 5 4-5 4M9 14h4" fill="none" stroke="#23344f" stroke-width="2"/></svg><span class="flex-grow-1">Compiler Results</span><button class="plain closex" aria-label="Close">×</button></div>
      <div class="ptab d-flex align-items-center sh"><svg width="16" height="18" viewBox="0 0 16 18"><path d="M5 11 1 16" stroke="#8fa8e0" stroke-width="2"/><circle cx="9" cy="7" r="5.500" fill="url(#lens)" stroke="#a8bdf0" stroke-width="1.500"/><path d="M5 16h8" stroke="#111" stroke-width="2"/></svg><span class="flex-grow-1">Find Results</span><button class="plain closex" aria-label="Close">×</button></div>
    </div>
    <div class="frame results"><div class="inner d-flex flex-column">
      <div class="log"><div class="headline">Tasks for visiting different places</div><div class="rule"></div></div>
      <button class="plain clear ms-auto my-auto">Clear</button>
    </div></div>
  </div>

  <!-- details -->
  <div class="rightcol d-flex flex-column">
    <div class="tabs d-flex"><div class="ptab on d-flex align-items-center sh">
      <svg width="16" height="17" viewBox="0 0 16 17"><circle cx="7.500" cy="7.500" r="6.500" fill="#29374f" stroke="#6d8ed8" stroke-width="1.500"/><path d="M7.500 6.500v5M7.500 3v2" stroke="#fff" stroke-width="2"/><path d="m12 12 3 4" stroke="#6d8ed8" stroke-width="2.500"/></svg>
      <span class="flex-grow-1">Details</span><button class="plain closex" aria-label="Close">×</button></div></div>
    <div class="frame flex-grow-1 dpanel d-flex flex-column">
      <div class="d-flex align-items-center dtop">
        <label class="searchbox d-flex align-items-center flex-grow-1"><input class="flex-grow-1" type="search" placeholder="Search Details" aria-label="Search details"><svg width="16" height="16"><use href="#mag" color="#000"/></svg></label>
        <button class="grid-btn d-flex align-items-center justify-content-center" aria-label="Property matrix"><svg width="14" height="15" viewBox="0 0 14 15"><path d="M0 1h3M4 1h4.500M9.500 1H14M0 4h3M4 4h4.500M9.500 4H14M0 7h3M4 7h4.500M9.500 7H14M0 10h3M4 10h4.500M9.500 10H14M0 13h3M4 13h4.500M9.500 13H14" stroke="#666" stroke-width="2"/></svg></button>
        <button class="plain d-flex align-items-center" aria-label="View options"><svg width="17" height="12" class="ms-1 me-1"><use href="#eye"/></svg><span class="caret gray"></span></button>
      </div>
      <div class="dcat d-flex align-items-center sh"><svg class="exp" height="9"><use href="#shut"/></svg>Actor Tick</div>
      <div class="dcat d-flex align-items-center sh"><svg class="exp" height="9"><use href="#shut"/></svg>General</div>
      <div class="dcat mb-0 d-flex align-items-center sh"><svg class="exp" height="9"><use href="#open"/></svg>Custom</div>
      <div class="props">
        <div class="prow h25"><span class="nm top"><svg class="exp" height="9"><use href="#open"/></svg>Quest Info</span><svg width="9" height="9" class="ms-2"><use href="#undo"/></svg></div>
        <div class="prow"><label class="nm" for="q1">Quest</label><div class="wrapsel w86"><select id="q1"><option>BP_Quest_01</option></select><span class="caret blk"></span></div>
          <div class="d-flex align-items-center ics"><svg width="12" height="10"><use href="#back"/></svg><svg width="13" height="13" color="#aaa"><use href="#mag"/></svg><svg width="12" height="12"><use href="#plus"/></svg><svg width="11" height="11" viewBox="0 0 11 11"><path d="m1 1 9 9M10 1l-9 9" stroke="#ddd" stroke-width="3.400"/></svg><svg width="9" height="9"><use href="#undo"/></svg></div></div>
        <div class="prow h25"><label class="nm" for="q2">is Track</label><input type="checkbox" id="q2"></div>
        <div class="prow h24"><label class="nm" for="q3">is Throw</label><input type="checkbox" id="q3"></div>
        <div class="prow"><label class="nm" for="q4">Type</label><div class="wrapsel w104"><select id="q4"><option>Basic</option></select><span class="caret blk"></span></div></div>
        <div class="prow"><label class="nm" for="q5">Status</label><div class="wrapsel w104"><select id="q5"><option>No Active</option></select><span class="caret blk"></span></div></div>
        <div class="prow"><label class="nm" for="q6">Complexity</label><div class="wrapsel w104"><select id="q6"><option>Easy</option></select><span class="caret blk"></span></div></div>
        <div class="prow h80"><label class="nm" for="q7">Ico</label>
          <div class="thumb ms-1"><svg width="64" height="62" viewBox="0 0 64 62"><path d="m32 1 30 30-30 30L2 31z" fill="#fff" stroke="#000" stroke-width="2"/><path d="m32 7 25 24-25 24L7 31z" fill="#fff" stroke="#000" stroke-width="1.500"/></svg></div>
          <div class="ms-1"><div class="wrapsel asset"><select id="q7"><option>T_Marker</option></select><span class="caret"></span></div>
            <div class="d-flex align-items-center ics2"><svg width="12" height="10"><use href="#back"/></svg><svg width="13" height="13" color="#aaa"><use href="#mag"/></svg></div></div></div>
        <div class="prow h24"><label class="nm" for="q8">Name</label><input type="text" id="q8" value="Training task" class="w88"><span class="caret gray carA"></span><svg width="9" height="9"><use href="#undo"/></svg></div>
        <div class="prow h24"><label class="nm" for="q9">Stage</label><div class="position-relative"><input type="text" id="q9" value="0" class="w104"><svg width="8" height="8" viewBox="0 0 8 8" class="spin"><path d="M4 0h4v4zM0 4v4h4z" fill="#111"/></svg></div></div>
        <div class="prow h27"><span class="nm arr"><svg class="exp" height="9"><use href="#open"/></svg>Quest Stage</span><span class="arrn">3 Array elements</span><div class="d-flex align-items-center ics3"><svg width="12" height="12"><use href="#plus"/></svg><svg width="11" height="12" viewBox="0 0 11 12"><path d="M0 1.500h11v1.500H0zM4 0h3v1H4zM1 4h9l-.5 8h-8zM3.500 5v6M5.500 5v6M7.500 5v6" fill="#ddd" stroke="#3e3e3e" stroke-width=".6"/></svg><svg width="9" height="9"><use href="#undo"/></svg></div></div>
        <div class="prow h24"><span class="nm el"><span class="grip"></span><svg class="exp" height="9"><use href="#shut"/></svg>0</span><span class="w98">3 members</span><span class="caret gray carB"></span><svg width="9" height="9"><use href="#undo"/></svg></div>
        <div class="prow h24"><span class="nm el"><span class="grip"></span><svg class="exp" height="9"><use href="#shut"/></svg>1</span><span class="w98">3 members</span><span class="caret gray carB"></span><svg width="9" height="9"><use href="#undo"/></svg></div>
        <div class="prow h24"><span class="nm el"><span class="grip"></span><svg class="exp" height="9"><use href="#shut"/></svg>2</span><span class="w98">3 members</span><span class="caret gray carB"></span><svg width="9" height="9"><use href="#undo"/></svg></div>
      </div>
      <div class="dcat d-flex align-items-center sh"><svg class="exp" height="9"><use href="#shut"/></svg>Local</div>
      <div class="dcat d-flex align-items-center sh"><svg class="exp" height="9"><use href="#shut"/></svg>Rendering</div>
      <div class="dcat d-flex align-items-center sh"><svg class="exp" height="9"><use href="#shut"/></svg>Replication</div>
      <div class="dcat d-flex align-items-center sh"><svg class="exp" height="9"><use href="#shut"/></svg>Input</div>
      <div class="dcat d-flex align-items-center sh"><svg class="exp" height="9"><use href="#shut"/></svg>Actor</div>
      <div class="dcat d-flex align-items-center sh"><svg class="exp" height="9"><use href="#shut"/></svg>Collision</div>
      <div class="dcat d-flex align-items-center sh"><svg class="exp" height="9"><use href="#shut"/></svg>LOD</div>
      <div class="dcat d-flex align-items-center sh"><svg class="exp" height="9"><use href="#shut"/></svg>Cooking</div>
    </div>
  </div>
</div>
<div class="foot"></div>
</body>
</html>
